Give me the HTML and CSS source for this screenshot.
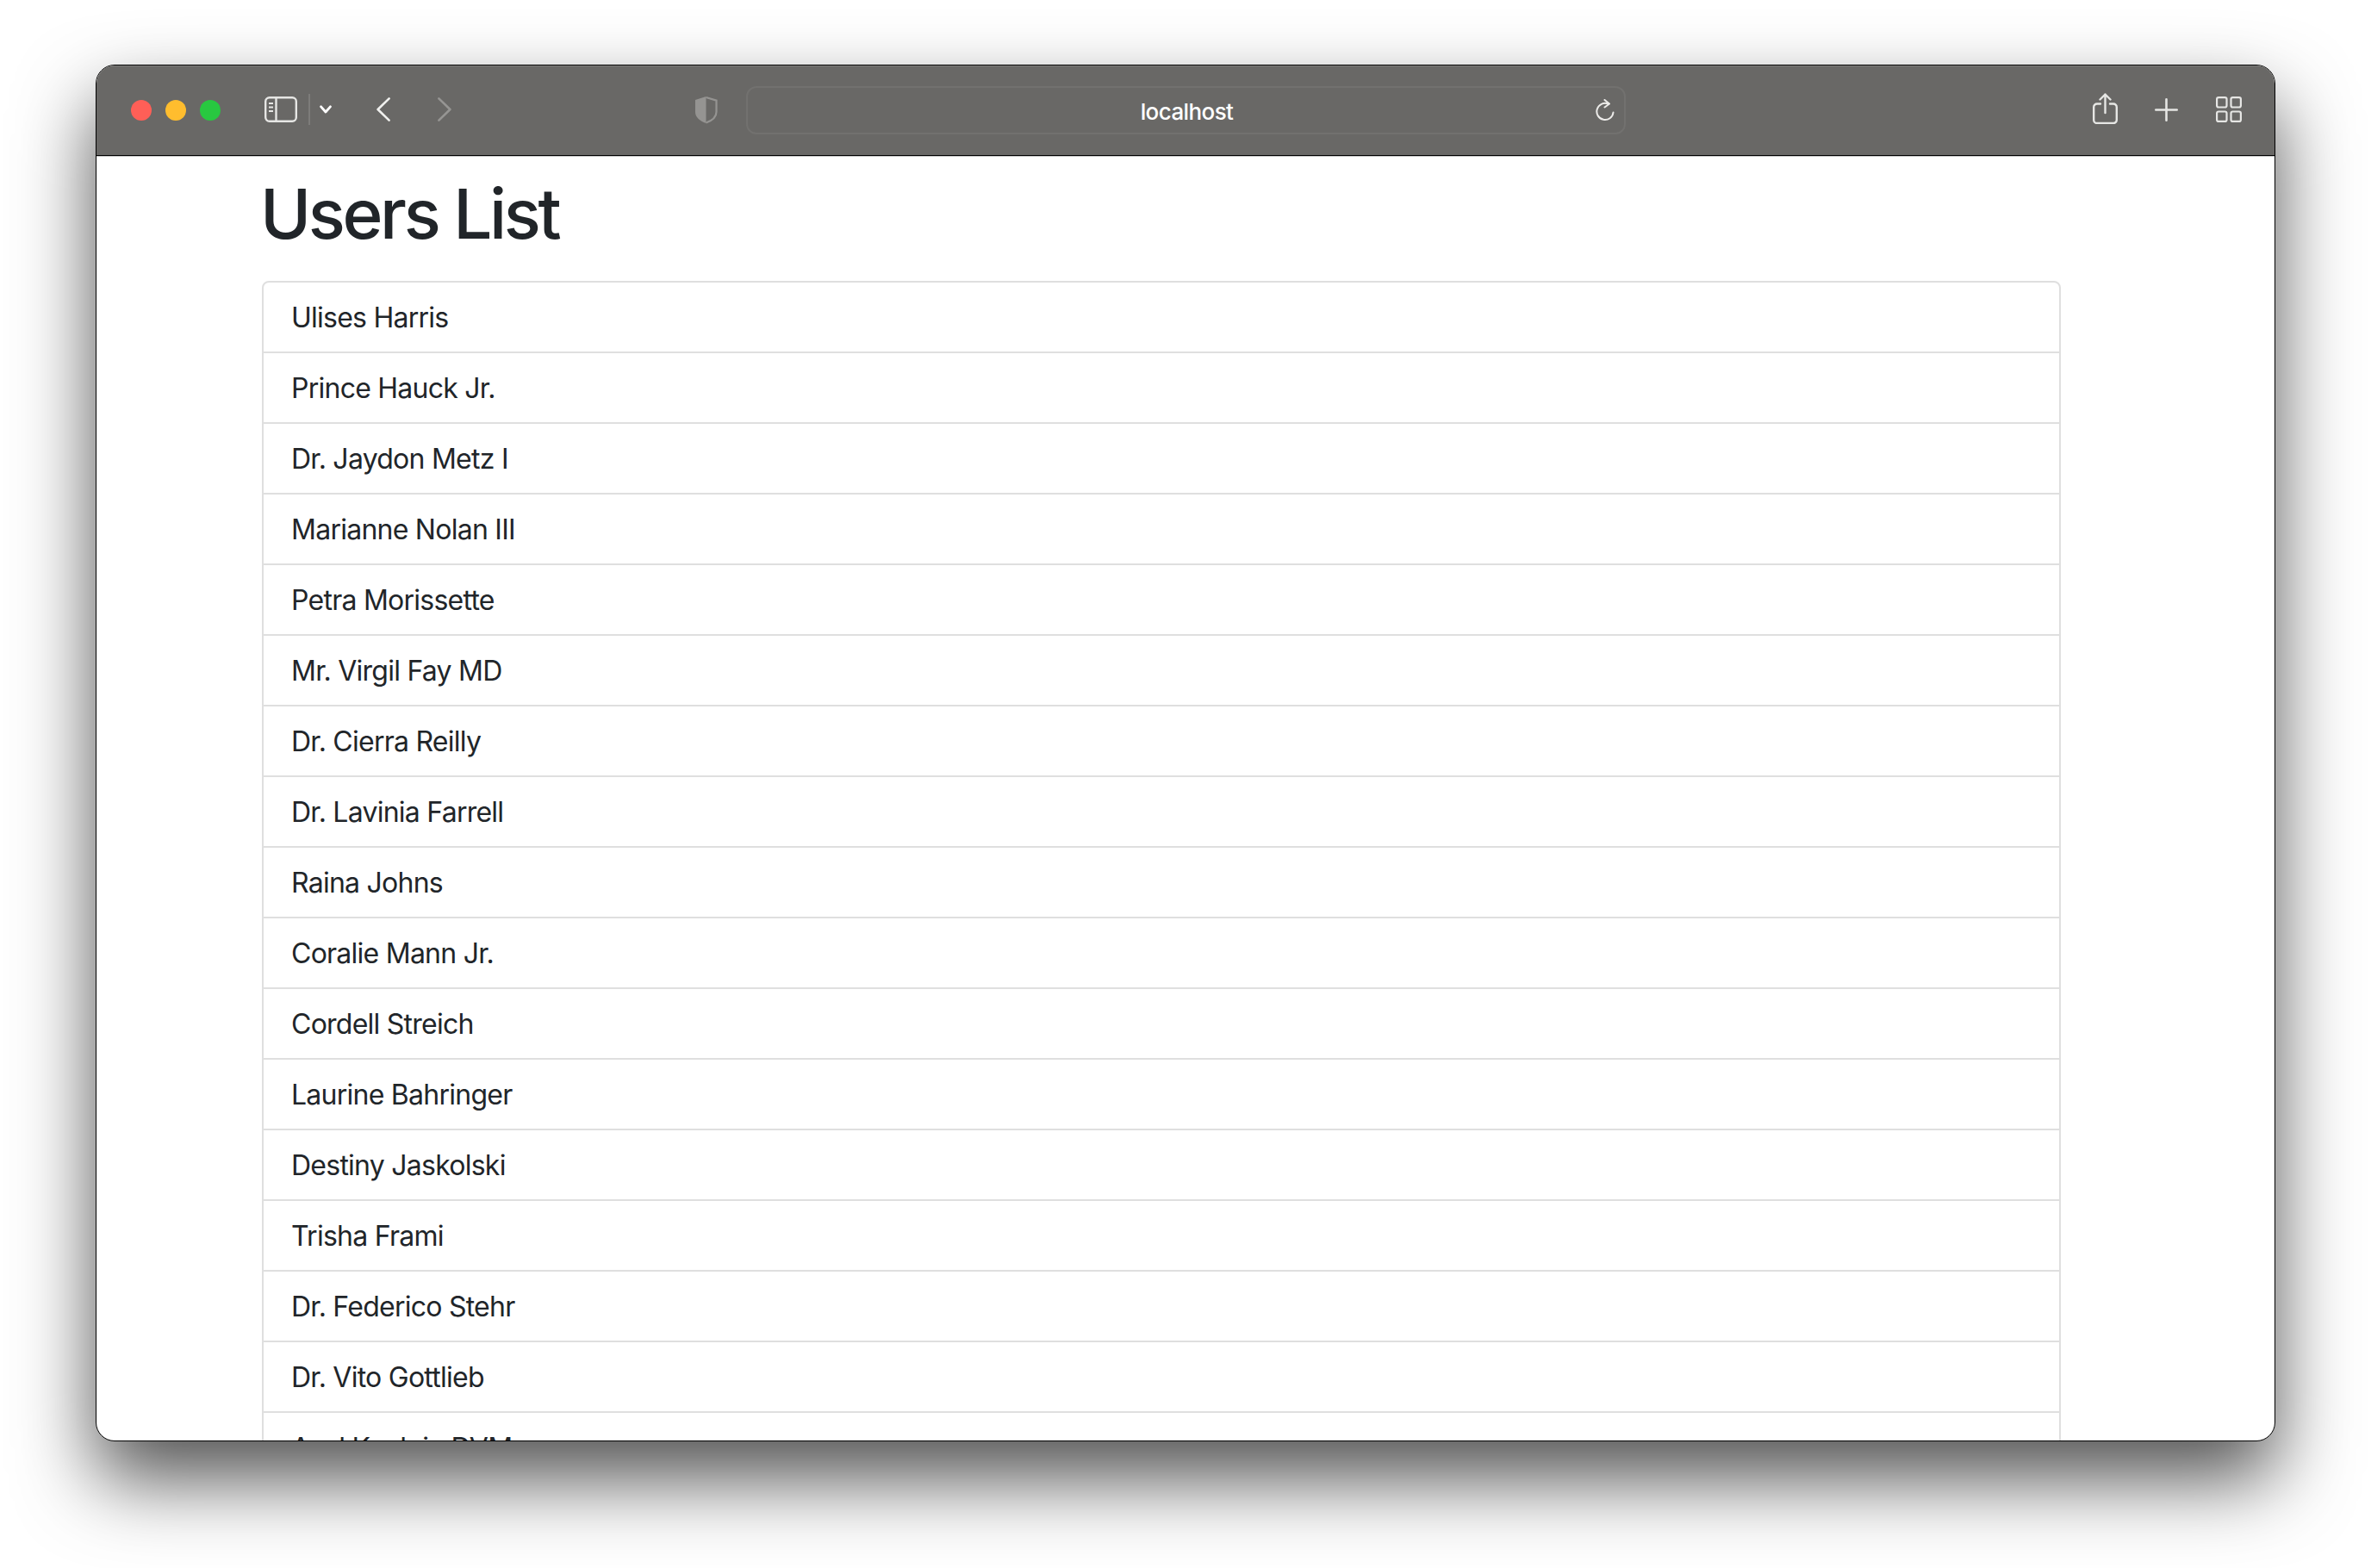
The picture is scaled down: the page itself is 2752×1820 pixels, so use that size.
FILE: index.html
```html
<!DOCTYPE html>
<html lang="en">
<head>
    <meta charset="UTF-8">
    <title>Users List</title>
    <link rel="stylesheet" href="styles.css">
</head>
<body>
    <div class="browser">
        <div class="toolbar">
            <div class="traffic">
                <span class="traffic__dot traffic__dot--red"></span>
                <span class="traffic__dot traffic__dot--yellow"></span>
                <span class="traffic__dot traffic__dot--green"></span>
            </div>
            <svg class="icon icon--sidebar" width="38" height="30" viewBox="0 0 38 30" fill="none" stroke="#e6e6e4" stroke-width="2.4">
                <rect x="1.2" y="1.2" width="35.6" height="27.6" rx="4.5"/>
                <path d="M13.5 1.2V28.8"/>
                <path d="M5 8h5M5 12.5h5M5 17h5" stroke-width="2"/>
            </svg>
            <span class="toolbar__divider"></span>
            <svg class="icon icon--caret" width="14" height="10" viewBox="0 0 14 10" fill="none" stroke="#fff" stroke-width="2.8" stroke-linecap="round" stroke-linejoin="round">
                <path d="M1.6 1.8L7 8l5.4-6.2"/>
            </svg>
            <svg class="icon icon--back" width="16" height="28" viewBox="0 0 16 28" fill="none" stroke="#f0f0ee" stroke-width="2.6" stroke-linecap="round" stroke-linejoin="round">
                <path d="M14.6 1.4L1.6 14l13 12.6"/>
            </svg>
            <svg class="icon icon--forward" width="16" height="28" viewBox="0 0 16 28" fill="none" stroke="#969593" stroke-width="2.6" stroke-linecap="round" stroke-linejoin="round">
                <path d="M1.4 1.4L14.4 14l-13 12.6"/>
            </svg>
            <svg class="icon icon--shield" width="27" height="33" viewBox="0 0 27 33" fill="none">
                <path d="M13.5 1L1 5v14c0 6 5 10.500 12.500 13z" fill="#959492"/>
                <path d="M13.500 2l12 3.600v13.400c0 5.500-4.500 9.800-12 12.500" stroke="#959492" stroke-width="2.200"/>
            </svg>
            <div class="address">
                <span class="address__url">localhost</span>
                <svg class="address__reload" width="22" height="26" viewBox="0 0 22 26" fill="none" stroke="#ecebe9" stroke-width="2" stroke-linecap="round" stroke-linejoin="round">
                    <path d="M14.500 5.500A9.600 9.600 0 1 0 20.500 15.500"/>
                    <path d="M10.500 1l5.500 4.500-5.500 4"/>
                </svg>
            </div>
            <svg class="icon icon--share" width="29" height="36" viewBox="0 0 29 36" fill="none" stroke="#e6e6e4" stroke-width="2.400" stroke-linecap="round" stroke-linejoin="round">
                <path d="M9 12.500H5a3.800 3.800 0 0 0-3.800 3.800v14.900A3.800 3.800 0 0 0 5 35h19a3.800 3.800 0 0 0 3.800-3.800V16.300A3.800 3.800 0 0 0 24 12.500h-4"/>
                <path d="M14.500 23V1.500M8.500 7.500l6-6 6 6"/>
            </svg>
            <svg class="icon icon--plus" width="27" height="27" viewBox="0 0 27 27" fill="none" stroke="#e6e6e4" stroke-width="2.600" stroke-linecap="round">
                <path d="M13.500 1.300v24.400M1.300 13.500h24.400"/>
            </svg>
            <svg class="icon icon--tabs" width="30" height="30" viewBox="0 0 30 30" fill="none" stroke="#e6e6e4" stroke-width="2.200">
                <rect x="1.100" y="1.100" width="11.400" height="11.400" rx="2"/>
                <rect x="17.500" y="1.100" width="11.400" height="11.400" rx="2"/>
                <rect x="1.100" y="17.500" width="11.400" height="11.400" rx="2"/>
                <rect x="17.500" y="17.500" width="11.400" height="11.400" rx="2"/>
            </svg>
        </div>

        <main class="page">
            <h1 class="page__title">Users List</h1>
            <ul class="user__list">
                <li class="user__item">Ulises Harris</li>
                <li class="user__item">Prince Hauck Jr.</li>
                <li class="user__item">Dr. Jaydon Metz I</li>
                <li class="user__item">Marianne Nolan III</li>
                <li class="user__item">Petra Morissette</li>
                <li class="user__item">Mr. Virgil Fay MD</li>
                <li class="user__item">Dr. Cierra Reilly</li>
                <li class="user__item">Dr. Lavinia Farrell</li>
                <li class="user__item">Raina Johns</li>
                <li class="user__item">Coralie Mann Jr.</li>
                <li class="user__item">Cordell Streich</li>
                <li class="user__item">Laurine Bahringer</li>
                <li class="user__item">Destiny Jaskolski</li>
                <li class="user__item">Trisha Frami</li>
                <li class="user__item">Dr. Federico Stehr</li>
                <li class="user__item">Dr. Vito Gottlieb</li>
                <li class="user__item">Axel Koelpin DVM</li>
            </ul>
        </main>
    </div>
</body>
</html>
```

FILE: styles.css
```css
html, body {
    height: 100%;
}
body {
    margin: 0;
    background: #fff;
    font-family: 'Inter', 'Liberation Sans', sans-serif;
    color: #212529;
    overflow: hidden;
}
.browser {
    box-sizing: border-box;
    width: 2530px;
    height: 1598px;
    margin: 75px 0 0 111px;
    border: 1px solid #000;
    border-radius: 22px;
    background: #fff;
    overflow: hidden;
    box-shadow: 0 44px 90px rgba(0, 0, 0, 0.68);
}
.toolbar {
    display: flex;
    align-items: center;
    box-sizing: border-box;
    height: 105px;
    padding-left: 40px;
    background: #696866;
    border-bottom: 1px solid #000;
    box-shadow: inset 0 1px 0 #7f7e7c, 0 1px 0 #c8c8c8;
}
.traffic {
    display: flex;
    gap: 16px;
}
.traffic__dot {
    width: 24px;
    height: 24px;
    border-radius: 50%;
}
.traffic__dot--red {
    background: #ff5f57;
}
.traffic__dot--yellow {
    background: #ffbd2e;
}
.traffic__dot--green {
    background: #28c840;
}
.icon {
    flex: none;
    display: block;
    margin-bottom: 2px;
}
.icon--sidebar {
    margin-left: 51px;
}
.toolbar__divider {
    width: 2px;
    height: 36px;
    margin-left: 13px;
    margin-bottom: 2px;
    background: #7d7c7a;
}
.icon--caret {
    margin-left: 11px;
}
.icon--back {
    margin-left: 52px;
}
.icon--forward {
    margin-left: 55px;
}
.icon--shield {
    margin-left: 282px;
}
.address {
    flex: none;
    box-sizing: border-box;
    display: grid;
    grid-template-columns: 1fr auto 1fr;
    align-items: center;
    width: 1021px;
    height: 56px;
    margin-left: 33px;
    margin-top: -1px;
    padding: 0 11px;
    border: 2px solid #72716f;
    border-radius: 12px;
}
.address__url {
    grid-column: 2;
    position: relative;
    top: 2px;
    left: 1px;
    font-size: 26px;
    font-weight: 500;
    letter-spacing: -0.6px;
    color: #fff;
}
.address__reload {
    grid-column: 3;
    justify-self: end;
}
.icon--share {
    margin-left: 542px;
    margin-bottom: 5px;
}
.icon--plus {
    margin-left: 43px;
}
.icon--tabs {
    margin-left: 44px;
}
.page {
    padding: 0 248px 0 192px;
}
.page__title {
    margin: 19px 0 30px -2px;
    font-size: 80px;
    line-height: 96px;
    font-weight: 500;
    letter-spacing: -3.4px;
}
.user__list {
    margin: 0;
    padding: 0;
    list-style: none;
    border: 2px solid #dfdfdf;
    border-radius: 8px;
}
.user__item {
    padding: 17px 32px 15px;
    font-size: 32px;
    line-height: 48px;
    letter-spacing: -0.75px;
    border-bottom: 2px solid #dfdfdf;
}
```
